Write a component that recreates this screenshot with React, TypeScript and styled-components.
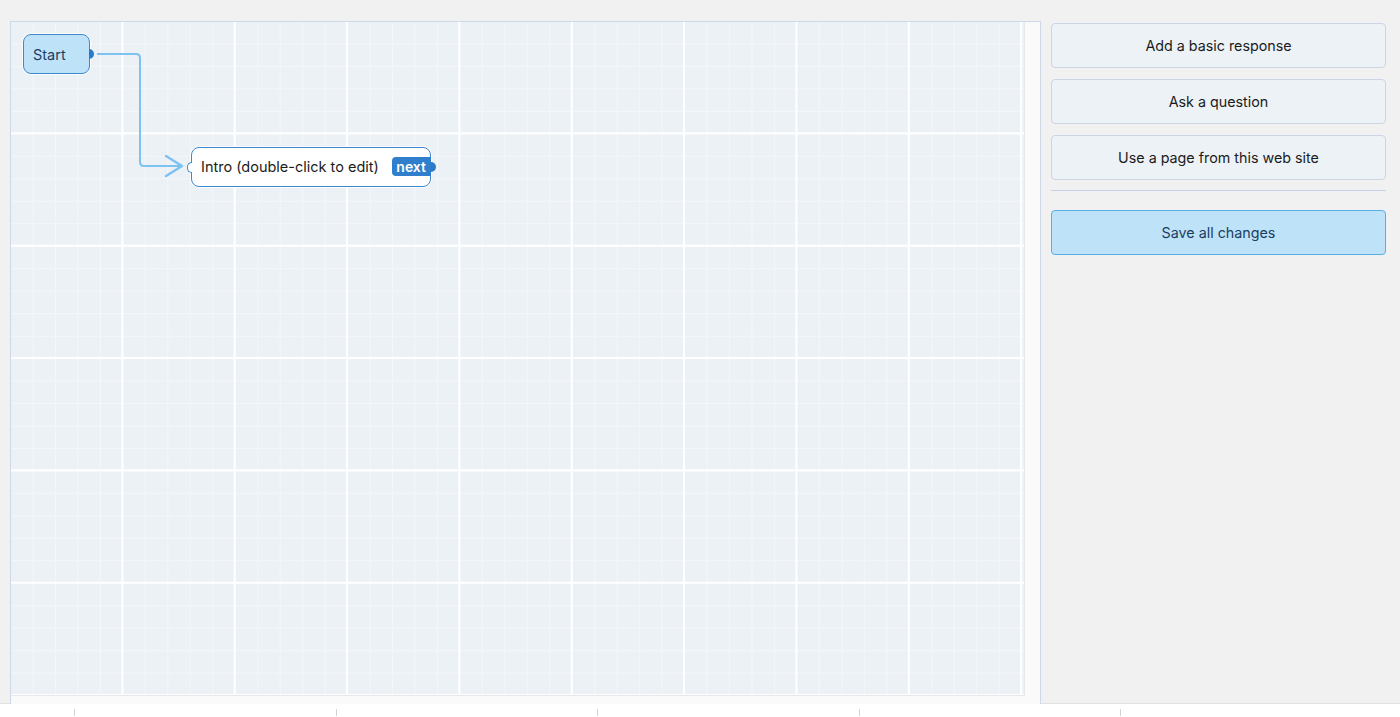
import styled, { createGlobalStyle } from "styled-components"

const GlobalStyle = createGlobalStyle`
  html, body {
    margin: 0;
    padding: 0;
    height: 717px;
    overflow: hidden;
    background: #ffffff;
    font-family: Inter, "Open Sans", "Liberation Sans", sans-serif;
  }
`

const flowButtons = ["Add a basic response", "Ask a question", "Use a page from this web site"]
const rulerTicks = [0, 1, 2, 3, 4]

const App: React.FC = () => {
  return (
    <>
      <GlobalStyle />
      <Workspace>
        <CanvasFrame>
          <Grid>
            <Edges width="200" height="170" viewBox="0 0 200 170">
              <path
                d="M86 32 H125 Q129 32 129 36 V140 Q129 144 133 144 H171"
                fill="none"
                stroke="#7dc2f0"
                strokeWidth="2"
              />
              <path
                d="M155 134 L171 144 L155 154"
                fill="none"
                stroke="#7dc2f0"
                strokeWidth="2.5"
                strokeLinecap="round"
                strokeLinejoin="round"
              />
            </Edges>

            <StartNode>
              Start
              <OutPort />
            </StartNode>

            <StepNode>
              <InPort />
              <StepLabel>Intro (double-click to edit)</StepLabel>
              <NextBadge>
                next
                <OutPort />
              </NextBadge>
            </StepNode>
          </Grid>
        </CanvasFrame>

        <Sidebar>
          {flowButtons.map((label) => (
            <ActionButton key={label}>{label}</ActionButton>
          ))}
          <Divider />
          <ActionButton $primary>Save all changes</ActionButton>
        </Sidebar>
      </Workspace>

      <Ruler>
        {rulerTicks.map((t) => (
          <Tick key={t} />
        ))}
      </Ruler>
    </>
  )
}

const Workspace = styled.div`
  display: flex;
  height: 704px;
  padding: 21px 0 0 10px;
  box-sizing: border-box;
  background: #f1f1f1;
  border-bottom: 1px solid #dfe1e4;
`

const CanvasFrame = styled.div`
  width: 1031px;
  height: 683px;
  box-sizing: border-box;
  padding: 0 16px 8px 0;
  background: #fafafa;
  border: 1px solid #cdd9e6;
  border-bottom: none;
`

const Grid = styled.div`
  position: relative;
  width: 1014px;
  height: 674px;
  box-sizing: border-box;
  border-right: 1px solid #e6e8eb;
  border-bottom: 1px solid #e6e8eb;
  background-color: #ecf1f6;
  background-image:
    linear-gradient(to right, transparent calc(100% - 2px), #ffffff calc(100% - 2px)),
    linear-gradient(to bottom, transparent calc(100% - 2px), #ffffff calc(100% - 2px)),
    linear-gradient(to right, transparent calc(100% - 1px), #f4f7fa calc(100% - 1px)),
    linear-gradient(to bottom, transparent calc(100% - 1px), #f4f7fa calc(100% - 1px));
  background-size:
    112.35px 112.35px,
    112.35px 112.35px,
    22.47px 22.47px,
    22.47px 22.47px;
`

const Edges = styled.svg`
  position: absolute;
  left: 0;
  top: 0;
  overflow: visible;
`

const StartNode = styled.div`
  position: absolute;
  left: 12px;
  top: 12px;
  width: 67px;
  height: 40px;
  box-sizing: border-box;
  display: flex;
  align-items: center;
  padding-left: 9px;
  background: #bee3f8;
  border: 1px solid #3d88cf;
  border-radius: 8px;
  box-shadow: 0 0 0 1px rgba(255, 255, 255, 0.85);
  font-size: 14.5px;
  color: #1c3d63;
`

const OutPort = styled.span`
  position: absolute;
  right: -5px;
  top: 50%;
  width: 5px;
  height: 10px;
  margin-top: -5px;
  background: #2b7bcb;
  border-radius: 0 5px 5px 0;
`

const StepNode = styled.div`
  position: absolute;
  left: 180px;
  top: 125px;
  width: 240px;
  height: 40px;
  box-sizing: border-box;
  display: flex;
  align-items: center;
  justify-content: space-between;
  background: #ffffff;
  border: 1px solid #3d88cf;
  border-radius: 8px;
  box-shadow: 0 0 0 1px rgba(255, 255, 255, 0.85);
`

const InPort = styled.span`
  position: absolute;
  left: -5px;
  top: 50%;
  width: 4px;
  height: 9px;
  margin-top: -5px;
  background: #ffffff;
  border: 1px solid #3d88cf;
  border-right: none;
  border-radius: 5px 0 0 5px;
`

const StepLabel = styled.span`
  padding-left: 9px;
  margin-top: -1px;
  font-size: 14.5px;
  color: #1b1b1b;
  white-space: nowrap;
`

const NextBadge = styled.span`
  position: relative;
  height: 19px;
  margin-top: -1px;
  margin-right: -1px;
  padding: 0 5px 0 4px;
  display: flex;
  align-items: center;
  background: #2f7fcd;
  border-radius: 4px 0 0 4px;
  color: #ffffff;
  font-size: 14px;
  font-weight: 600;
`

const Sidebar = styled.div`
  flex: 1;
  display: flex;
  flex-direction: column;
  gap: 11px;
  padding: 2px 14px 0 10px;
`

const ActionButton = styled.button<{ $primary?: boolean }>`
  height: 45px;
  flex: none;
  box-sizing: border-box;
  background: ${(p) => (p.$primary ? "#bee3f8" : "#edf2f7")};
  border: 1px solid ${(p) => (p.$primary ? "#5aaee6" : "#cad6e3")};
  border-radius: 4px;
  font-family: inherit;
  font-size: 14.3px;
  color: ${(p) => (p.$primary ? "#1c3d63" : "#1b1b1b")};
  cursor: pointer;
`

const Divider = styled.hr`
  margin: -1px 0 8px;
  border: none;
  border-top: 1px solid #c3d3e5;
`

const Ruler = styled.div`
  display: grid;
  grid-template-columns: repeat(5, 261.5px);
  padding: 5px 0 0 74px;
  height: 12px;
  background: #ffffff;
`

const Tick = styled.span`
  width: 1px;
  height: 7px;
  background: #cfd2d6;
`

export default App
